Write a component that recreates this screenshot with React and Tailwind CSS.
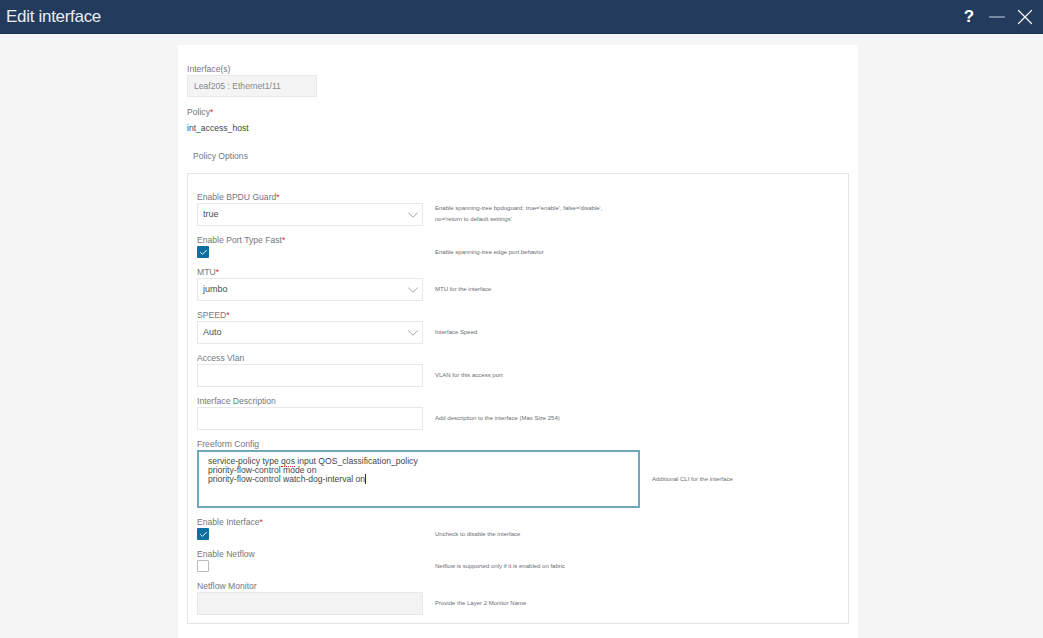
import React from 'react';
import { ChevronDown, Check, X, Minus } from 'lucide-react';

const Req = () => <span className="text-[#d0312d]">*</span>;

const Label = ({ children, required }) => (
  <div className="h-3 text-[8.6px] leading-3 text-[#73787d]">
    {children}
    {required && <Req />}
  </div>
);

const Help = ({ children, className = '' }) => (
  <div className={`text-[6px] leading-[11px] text-[#6a6e72] ${className}`}>{children}</div>
);

const Select = ({ value }) => (
  <div className="flex h-[23px] w-[226px] items-center justify-between border border-[#e6e8ea] bg-white pl-[5px] text-[9px] text-[#4a4e52]">
    {value}
    <ChevronDown size={18} strokeWidth={1} className="text-[#80868c]" />
  </div>
);

const Input = ({ disabled }) => (
  <div className={`h-[23px] w-[226px] border border-[#e6e8ea] ${disabled ? 'bg-[#f3f3f3]' : 'bg-white'}`} />
);

const Checkbox = ({ checked }) =>
  checked ? (
    <div className="flex h-3 w-3 items-center justify-center rounded-[1px] bg-[#0f6f9e]">
      <Check size={9} strokeWidth={2.5} className="text-white" />
    </div>
  ) : (
    <div className="h-3 w-3 rounded-[1px] border border-[#b5b9bc] bg-white" />
  );

const HelpRow = ({ label, required, help, children }) => (
  <div className="flex">
    <div className="w-[226px] shrink-0">
      <Label required={required}>{label}</Label>
      {children}
    </div>
    <div className="ml-3 flex w-[200px] shrink-0 flex-col justify-end">{help}</div>
  </div>
);

export default function App() {
  return (
    <div className="flex h-[638px] w-[1043px] flex-col overflow-hidden bg-[#f5f5f5] font-['Liberation_Sans',sans-serif]">
      {/* top bar */}
      <div className="flex h-[34px] shrink-0 items-center justify-between border-b border-[#1c3350] bg-[#233c5e] pl-[6px] pr-1">
        <span className="text-[17px] tracking-[-0.3px] text-[#e8edf2]">Edit interface</span>
        <div className="flex items-center text-white">
          <span className="w-7 text-center text-[17px] font-bold leading-none">?</span>
          <div className="flex w-7 justify-center">
            <Minus size={26} strokeWidth={1} className="text-[#c8d3df]" />
          </div>
          <div className="flex w-7 justify-center">
            <X size={26} strokeWidth={1.1} />
          </div>
        </div>
      </div>

      <div className="ml-[178px] mt-[11px] h-full w-[680px] bg-white pl-[9px] pr-[9px] pt-[18px]">
        <Label>Interface(s)</Label>
        <div className="flex h-[22px] w-[130px] items-center border border-[#e8e9ea] bg-[#f4f4f4] pl-[6px] text-[8.6px] text-[#85898d]">
          Leaf205 : Ethernet1/11
        </div>
        <div className="mt-[9px]">
          <Label required>Policy</Label>
        </div>
        <div className="mt-[4px] h-3 text-[8.6px] leading-3 text-[#44484c]">int_access_host</div>
        <div className="ml-[6px] mt-[16px]">
          <Label>Policy Options</Label>
        </div>

        <div className="mt-[11px] flex h-[451px] flex-col gap-2 border border-[#e3e5e7] pl-[9px] pt-[17px]">
          <HelpRow
            label="Enable BPDU Guard"
            required
            help={
              <Help className="pb-px">
                Enable spanning-tree bpduguard: true='enable', false='disable',
                <br />
                no='return to default settings'
              </Help>
            }
          >
            <Select value="true" />
          </HelpRow>
          <HelpRow label="Enable Port Type Fast" required help={<Help>Enable spanning-tree edge port behavior</Help>}>
            <Checkbox checked />
          </HelpRow>
          <HelpRow label="MTU" required help={<Help className="pb-[6px]">MTU for the interface</Help>}>
            <Select value="jumbo" />
          </HelpRow>
          <HelpRow label="SPEED" required help={<Help className="pb-[6px]">Interface Speed</Help>}>
            <Select value="Auto" />
          </HelpRow>
          <HelpRow label="Access Vlan" help={<Help className="pb-[6px]">VLAN for this access port</Help>}>
            <Input />
          </HelpRow>
          <HelpRow label="Interface Description" help={<Help className="pb-[6px]">Add description to the interface (Max Size 254)</Help>}>
            <Input />
          </HelpRow>

          <div className="flex">
            <div className="w-[443px] shrink-0">
              <Label>Freeform Config</Label>
              <div className="h-[58px] w-[443px] border-2 border-[#6fa8bd] bg-white pl-[9px] pt-[5px] text-[8.6px] leading-[9px] text-[#44484c]">
                service-policy type <span className="border-b border-dotted border-[#d0312d]">qos</span> input QOS_classification_policy
                <br />
                priority-flow-control mode on
                <br />
                priority-flow-control watch-dog-interval on<span className="border-l border-[#333]" />
              </div>
            </div>
            <div className="ml-3 flex flex-col justify-end pb-[23px]">
              <Help>Additional CLI for the interface</Help>
            </div>
          </div>

          <HelpRow label="Enable Interface" required help={<Help>Uncheck to disable the interface</Help>}>
            <Checkbox checked />
          </HelpRow>
          <HelpRow label="Enable Netflow" help={<Help>Netflow is supported only if it is enabled on fabric</Help>}>
            <Checkbox />
          </HelpRow>
          <HelpRow label="Netflow Monitor" help={<Help className="pb-[6px]">Provide the Layer 2 Monitor Name</Help>}>
            <Input disabled />
          </HelpRow>
        </div>
      </div>
    </div>
  );
}
